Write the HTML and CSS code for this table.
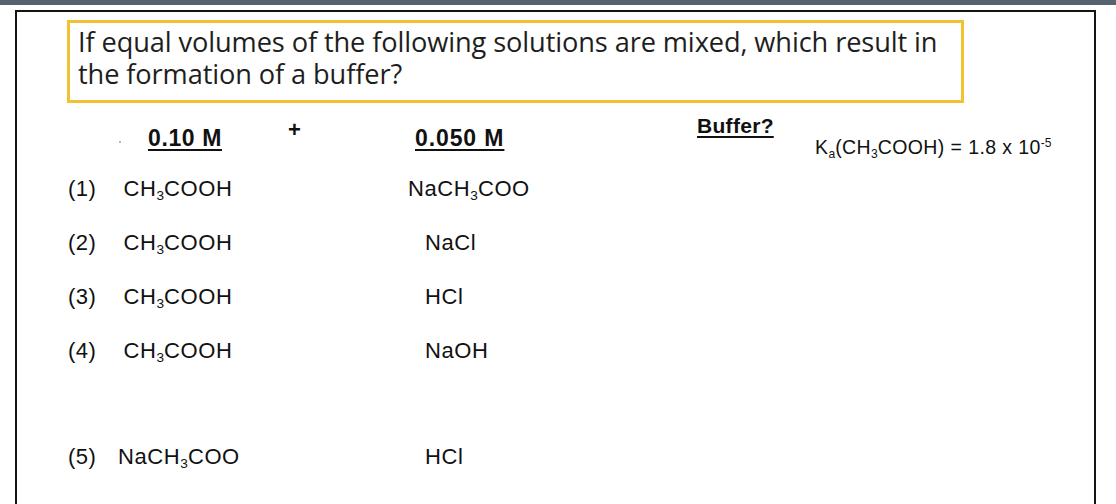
FILE: index.html
```html
<!DOCTYPE html>
<html>
<head>
<meta charset="utf-8">
<link rel="stylesheet" href="styles.css">
</head>
<body>
<div class="topbar"></div>
<div class="frame">
  <div class="question">If equal volumes of the following solutions are mixed, which result in the formation of a buffer?</div>
  <div class="table">
    <div class="row head">
      <div class="lab"><span class="dot"></span></div>
      <div class="c1"><span class="hd h1">0.10 M</span></div>
      <div class="plus">+</div>
      <div class="c2"><span class="hd h2">0.050 M</span></div>
      <div class="buf"><span class="hd">Buffer?</span></div>
      <div class="ka">K<sub>a</sub>(CH<sub>3</sub>COOH) = 1.8 x 10<sup>-5</sup></div>
    </div>
    <div class="row">
      <div class="lab">(1)</div>
      <div class="c1">CH<sub>3</sub>COOH</div>
      <div class="sp"></div>
      <div class="c2 shift">NaCH<sub>3</sub>COO</div>
    </div>
    <div class="row">
      <div class="lab">(2)</div>
      <div class="c1">CH<sub>3</sub>COOH</div>
      <div class="sp"></div>
      <div class="c2">NaCl</div>
    </div>
    <div class="row">
      <div class="lab">(3)</div>
      <div class="c1">CH<sub>3</sub>COOH</div>
      <div class="sp"></div>
      <div class="c2">HCl</div>
    </div>
    <div class="row">
      <div class="lab">(4)</div>
      <div class="c1">CH<sub>3</sub>COOH</div>
      <div class="sp"></div>
      <div class="c2">NaOH</div>
    </div>
    <div class="row last">
      <div class="lab">(5)</div>
      <div class="c1">NaCH<sub>3</sub>COO</div>
      <div class="sp"></div>
      <div class="c2">HCl</div>
    </div>
  </div>
</div>
</body>
</html>
```

FILE: styles.css
```css
html, body {
  margin: 0;
  padding: 0;
  background: #ffffff;
  overflow: hidden;
}
body {
  width: 1116px;
  height: 504px;
}
.topbar {
  height: 5px;
  background: #56636e;
}
.frame {
  margin: 5px 20px 0 15px;
  height: 499px;
  border: 2px solid #141414;
  border-bottom: none;
  box-sizing: border-box;
}
.question {
  margin: 8px 0 0 50px;
  width: 897px;
  height: 83px;
  box-sizing: border-box;
  border: 3px solid #f1c232;
  padding: 3px 0 0 8px;
  font-family: "Open Sans", sans-serif;
  font-size: 27.2px;
  line-height: 32px;
  letter-spacing: -0.1px;
  color: #1e1e1e;
}
.table {
  padding-left: 51px;
  font-family: "Liberation Sans", Arial, sans-serif;
  font-size: 22px;
  color: #111;
  letter-spacing: 0.6px;
}
.row {
  display: grid;
  grid-template-columns: 50px 120px 187px 272px 118px 1fr;
  height: 54px;
  align-items: center;
}
.row.head {
  margin-top: 11px;
  height: 48px;
}
.row.last {
  margin-top: 52px;
}
sub {
  font-size: 0.62em;
  vertical-align: -0.3em;
  line-height: 0;
  letter-spacing: 0;
}
sup {
  font-size: 0.62em;
  vertical-align: 0.55em;
  line-height: 0;
  letter-spacing: 0;
}
.c1 {
  text-align: center;
  white-space: nowrap;
}
.c2 {
  white-space: nowrap;
}
.shift {
  margin-left: -17px;
}
.hd {
  font-weight: bold;
  text-decoration: underline;
  text-underline-offset: 3px;
  text-decoration-thickness: 2px;
  display: inline-block;
}
.h1 {
  margin-left: 14px;
  font-size: 23px;
  letter-spacing: 0.6px;
}
.h2 {
  margin-left: -10px;
  font-size: 23px;
  letter-spacing: 0.9px;
}
.plus {
  padding-left: 50px;
  align-self: start;
  margin-top: 3px;
  font-weight: bold;
}
.buf {
  align-self: start;
  margin-top: 0;
  font-size: 21px;
  letter-spacing: 0.3px;
}
.ka {
  font-size: 19.5px;
  letter-spacing: 0.4px;
  white-space: nowrap;
  margin-top: 18px;
}
.lab {
  position: relative;
  letter-spacing: 0.5px;
}
.dot {
  position: absolute;
  left: 51px;
  top: 3px;
  width: 2px;
  height: 2px;
  background: #9a9a9a;
  border-radius: 50%;
}
```
